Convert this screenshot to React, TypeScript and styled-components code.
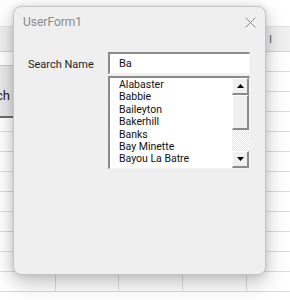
import styled, { createGlobalStyle } from 'styled-components'

const GlobalStyle = createGlobalStyle`
  html, body {
    margin: 0;
    padding: 0;
    background: #ffffff;
  }
  body {
    font-family: Roboto, 'Noto Sans', sans-serif;
  }
`

const names = ['Alabaster', 'Babbie', 'Baileyton', 'Bakerhill', 'Banks', 'Bay Minette', 'Bayou La Batre']
const cellWidths = [56, 63, 64, 64, 64]
const rowCount = 12

const App = () => {
  return (
    <Sheet>
      <GlobalStyle />
      <HeaderRow>
        <ColLabel>I</ColLabel>
      </HeaderRow>
      {Array.from({ length: rowCount }).map((_, r) => (
        <Row key={r}>
          {cellWidths.map((w, c) => (
            <Cell key={c} $w={w} />
          ))}
        </Row>
      ))}
      <SheetButton>Search</SheetButton>

      <Dialog>
        <TitleBar>
          <Title>UserForm1</Title>
          <CloseIcon width="11" height="11" viewBox="0 0 11 11">
            <path d="M0.5 0.5 L10.5 10.5 M10.5 0.5 L0.5 10.5" stroke="#8c8c8c" strokeWidth="1" fill="none" />
          </CloseIcon>
        </TitleBar>
        <Body>
          <Label>Search Name</Label>
          <Controls>
            <TextBox>Ba</TextBox>
            <ListBox>
              <Items>
                {names.map((n) => (
                  <Item key={n}>{n}</Item>
                ))}
              </Items>
              <ScrollBar>
                <ArrowButton>
                  <svg width="7" height="4" viewBox="0 0 7 4">
                    <path d="M3.5 0 L7 4 L0 4 Z" fill="#000" />
                  </svg>
                </ArrowButton>
                <Thumb />
                <Track />
                <ArrowButton>
                  <svg width="7" height="4" viewBox="0 0 7 4">
                    <path d="M0 0 L7 0 L3.5 4 Z" fill="#000" />
                  </svg>
                </ArrowButton>
              </ScrollBar>
            </ListBox>
          </Controls>
        </Body>
      </Dialog>
    </Sheet>
  )
}

const Sheet = styled.div`
  position: relative;
  width: 290px;
  height: 300px;
  overflow: hidden;
  background: #ffffff;
  padding-top: 26px;
  box-sizing: border-box;
`
const HeaderRow = styled.div`
  height: 26px;
  background: #f0f0f0;
  border-top: 1px solid #e2e2e2;
  border-bottom: 1px solid #d4d4d4;
  display: flex;
  align-items: center;
  box-sizing: border-box;
`
const ColLabel = styled.span`
  margin-left: 269px;
  font-size: 11px;
  color: #555;
`
const Row = styled.div`
  display: flex;
  height: 20px;
  border-bottom: 1px solid #dcdcdc;
  box-sizing: border-box;
`
const Cell = styled.div<{ $w: number }>`
  width: ${(p) => p.$w}px;
  flex-shrink: 0;
  border-right: 1px solid #dcdcdc;
  box-sizing: border-box;
`
const SheetButton = styled.div`
  position: absolute;
  left: -40px;
  top: 65px;
  width: 80px;
  height: 53px;
  box-sizing: border-box;
  background: #e9e9e9;
  border: 1px solid #c8c8c8;
  border-bottom: 2px solid #6e6e6e;
  display: flex;
  align-items: center;
  padding: 9px 0 0 9px;
  font-size: 13px;
  color: #222;
`
const Dialog = styled.div`
  position: absolute;
  left: 13px;
  top: 6px;
  width: 253px;
  height: 269px;
  box-sizing: border-box;
  background: #efefef;
  border: 1px solid #c4c4c4;
  border-radius: 8px;
  box-shadow: 0 7px 20px rgba(0, 0, 0, 0.26), 0 0 6px rgba(0, 0, 0, 0.1);
  display: flex;
  flex-direction: column;
`
const TitleBar = styled.div`
  height: 30px;
  display: flex;
  align-items: center;
  justify-content: space-between;
  padding: 0 9px 0 9px;
  box-sizing: border-box;
`
const Title = styled.span`
  font-size: 12px;
  color: #8a8a8a;
`
const CloseIcon = styled.svg`
  display: block;
`
const Body = styled.div`
  display: flex;
  padding: 15px 0 0 14px;
`
const Label = styled.div`
  width: 80px;
  padding-top: 6px;
  font-size: 11px;
  color: #1e1e1e;
`
const Controls = styled.div`
  display: flex;
  flex-direction: column;
  gap: 2px;
  width: 142px;
`
const sunken = `
  border-style: solid;
  border-width: 2px 1px 1px 2px;
  border-color: #8a8a8a #f4f4f4 #f4f4f4 #8a8a8a;
  box-sizing: border-box;
  background: #ffffff;
`
const TextBox = styled.div`
  ${sunken}
  height: 22px;
  padding: 3px 0 0 9px;
  font-size: 11px;
  color: #111;
`
const ListBox = styled.div`
  ${sunken}
  height: 93px;
  display: flex;
`
const Items = styled.div`
  flex: 1;
  padding: 1px 0 0 9px;
`
const Item = styled.div`
  height: 12.4px;
  line-height: 12.4px;
  font-size: 10.5px;
  color: #111;
  white-space: nowrap;
`
const raised = `
  box-sizing: border-box;
  background: #f0f0f0;
  border-style: solid;
  border-width: 1px 2px 2px 1px;
  border-color: #ffffff #8a8a8a #8a8a8a #ffffff;
`
const ScrollBar = styled.div`
  width: 17px;
  display: flex;
  flex-direction: column;
`
const ArrowButton = styled.div`
  ${raised}
  height: 17px;
  display: flex;
  align-items: center;
  justify-content: center;
`
const Thumb = styled.div`
  ${raised}
  height: 35px;
`
const Track = styled.div`
  flex: 1;
  background-color: #ffffff;
  background-image: repeating-conic-gradient(#e6e6e6 0 25%, #ffffff 0 50%);
  background-size: 2px 2px;
`

export default App
